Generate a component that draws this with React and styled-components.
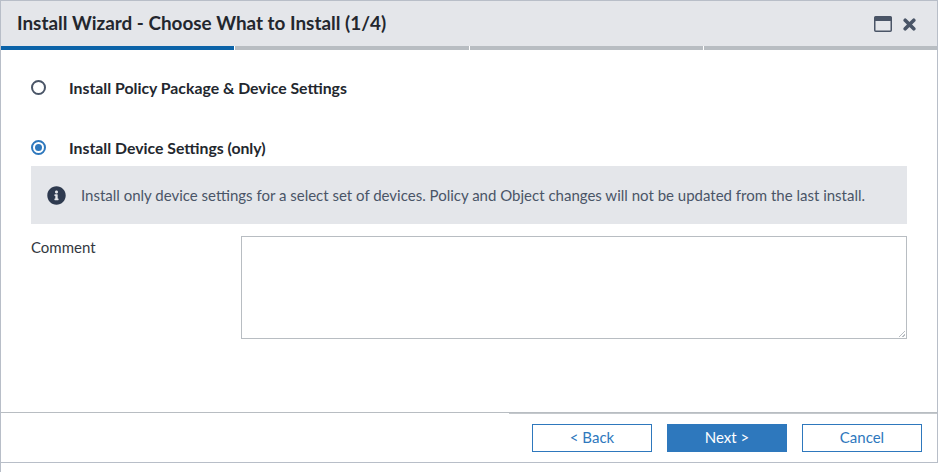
import React from "react";
import styled, { createGlobalStyle } from "styled-components";
import { FaInfoCircle } from "react-icons/fa";

const GlobalStyle = createGlobalStyle`
    html, body {
        margin: 0;
        padding: 0;
        background: #fff;
    }
    * {
        box-sizing: border-box;
    }
`;

const Window = styled.div`
    width: 938px;
    height: 472px;
    display: flex;
    flex-direction: column;
    font-family: Lato, "Open Sans", sans-serif;
    background: #fff;
    border-left: 1px solid #b8bec8;
    overflow: hidden;
`;
const Frame = styled.div`
    height: 463px;
    display: flex;
    flex-direction: column;
    border-top: 1px solid #b8bec8;
    border-right: 1px solid #b8bec8;
    border-bottom: 1px solid #b8bec8;
`;
const Header = styled.header`
    height: 45px;
    flex: none;
    display: flex;
    align-items: center;
    justify-content: space-between;
    padding: 0 21px 2px 16px;
    background: #e4e6ea;
`;
const Title = styled.h1`
    margin: 0;
    font-size: 18.9px;
    font-weight: 700;
    color: #23272e;
`;
const WindowIcons = styled.div`
    display: flex;
    align-items: center;
    gap: 11px;
    color: #4a5567;
    margin-top: 3px;
    svg:last-child {
        margin-top: 1px;
    }
`;
const Steps = styled.div`
    flex: none;
    display: grid;
    grid-template-columns: 233px 234px 233px 1fr;
    gap: 1px;
    height: 4px;
    background: #fff;
`;
const Step = styled.div`
    background: ${(p) => (p.$active ? "#0b63a8" : "#b8bdc2")};
`;
const Body = styled.main`
    flex: 1;
    display: flex;
    flex-direction: column;
    padding: 30px 30px 0 30px;
`;
const RadioRow = styled.label`
    display: flex;
    align-items: center;
    gap: 23px;
    height: 15px;
    margin-bottom: ${(p) => p.$gap}px;
`;
const Radio = styled.span`
    width: 15px;
    height: 15px;
    flex: none;
    border-radius: 50%;
    border: 2px solid ${(p) => (p.$checked ? "#2e78bd" : "#4a5567")};
    display: flex;
    align-items: center;
    justify-content: center;
    &::after {
        content: "";
        display: ${(p) => (p.$checked ? "block" : "none")};
        width: 7px;
        height: 7px;
        border-radius: 50%;
        background: #2e78bd;
    }
`;
const RadioText = styled.span`
    font-size: 15.8px;
    font-weight: 700;
    color: #23272e;
`;
const InfoBox = styled.div`
    height: 58px;
    flex: none;
    display: flex;
    align-items: center;
    gap: 15px;
    padding: 0 0 0 16px;
    background: #e4e6ea;
    color: #4a5567;
    font-size: 15px;
    svg {
        color: #2e3a4f;
        flex: none;
    }
`;
const FormRow = styled.div`
    display: flex;
    margin-top: 12px;
`;
const FieldLabel = styled.label`
    width: 210px;
    flex: none;
    font-size: 15px;
    color: #33383f;
    padding-top: 2px;
`;
const CommentInput = styled.textarea`
    width: 666px;
    height: 103px;
    display: block;
    margin: 0;
    padding: 4px;
    border: 1px solid #b8bdc2;
    border-radius: 0;
    outline: none;
    background: #fff;
    font-family: inherit;
    font-size: 15px;
    &::-webkit-resizer {
        background: linear-gradient(135deg, transparent 45%, #b8bdc2 45%, #b8bdc2 58%, transparent 58%, transparent 72%, #b8bdc2 72%, #b8bdc2 85%, transparent 85%) no-repeat right 1px bottom 1px / 6px 6px;
    }
`;
const Footer = styled.footer`
    flex: none;
    height: 50px;
    border-top: 1px solid #b8bdc2;
`;
const ButtonBar = styled.div`
    height: 49px;
    margin-left: 508px;
    border-top: 1px solid #c4c8cc;
    display: flex;
    gap: 15px;
    padding: 10px 0 0 23px;
`;
const Button = styled.button`
    width: 120px;
    height: 28px;
    padding: 0 0 2px;
    border: 1px solid #2e78bd;
    border-radius: 0;
    background: ${(p) => (p.$primary ? "#2e78bd" : "#fff")};
    color: ${(p) => (p.$primary ? "#fff" : "#2e78bd")};
    font-family: inherit;
    font-size: 15px;
`;

const MaximizeIcon = () => (
    <svg width="18" height="16" viewBox="0 0 18 16">
        <rect x="0.75" y="0.75" width="16.5" height="14.5" rx="1" fill="none" stroke="currentColor" strokeWidth="1.5" />
        <rect x="0.5" y="0.5" width="17" height="4.5" rx="1" fill="currentColor" />
    </svg>
);

const CloseIcon = () => (
    <svg width="13" height="13" viewBox="0 0 13 13">
        <path d="M2.2 2.2 L10.8 10.8 M10.8 2.2 L2.2 10.8" fill="none" stroke="currentColor" strokeWidth="3.6" strokeLinecap="round" />
    </svg>
);

const App = () => {
    return (
        <>
            <GlobalStyle />
            <Window>
                <Frame>
                    <Header>
                        <Title>{"Install Wizard - Choose What to Install (1/4)"}</Title>
                        <WindowIcons>
                            <MaximizeIcon />
                            <CloseIcon />
                        </WindowIcons>
                    </Header>
                    <Steps>
                        <Step $active />
                        <Step />
                        <Step />
                        <Step />
                    </Steps>
                    <Body>
                        <RadioRow $gap={45}>
                            <Radio />
                            <RadioText>{"Install Policy Package & Device Settings"}</RadioText>
                        </RadioRow>
                        <RadioRow $gap={11}>
                            <Radio $checked />
                            <RadioText>{"Install Device Settings (only)"}</RadioText>
                        </RadioRow>
                        <InfoBox>
                            <FaInfoCircle size={19} />
                            {"Install only device settings for a select set of devices. Policy and Object changes will not be updated from the last install."}
                        </InfoBox>
                        <FormRow>
                            <FieldLabel>{"Comment"}</FieldLabel>
                            <CommentInput />
                        </FormRow>
                    </Body>
                    <Footer>
                        <ButtonBar>
                            <Button>{"< Back"}</Button>
                            <Button $primary>{"Next >"}</Button>
                            <Button>{"Cancel"}</Button>
                        </ButtonBar>
                    </Footer>
                </Frame>
            </Window>
        </>
    );
};

export default App;
